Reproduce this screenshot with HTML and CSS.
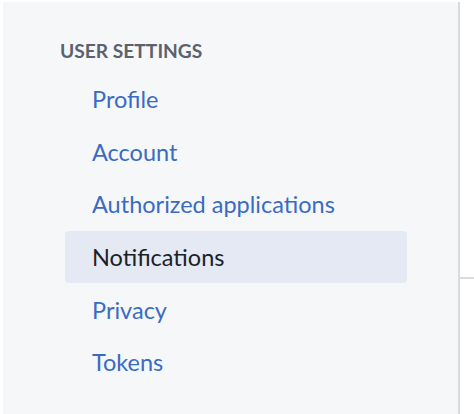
FILE: index.html
```html
<!DOCTYPE html>
<html>
<head>
<meta charset="utf-8">
<link rel="stylesheet" href="styles.css">
</head>
<body>
<div class="layout">
  <aside class="sidebar">
    <h2 class="heading">USER SETTINGS</h2>
    <ul class="nav">
      <li class="nav-item"><a class="nav-link" href="#">Profile</a></li>
      <li class="nav-item"><a class="nav-link" href="#">Account</a></li>
      <li class="nav-item"><a class="nav-link" href="#">Authorized applications</a></li>
      <li class="nav-item active"><a class="nav-link" href="#">Notifications</a></li>
      <li class="nav-item"><a class="nav-link" href="#">Privacy</a></li>
      <li class="nav-item"><a class="nav-link" href="#">Tokens</a></li>
    </ul>
  </aside>
  <main class="content">
    <div class="rule"></div>
  </main>
</div>
</body>
</html>
```
FILE: styles.css
```css
html, body {
  margin: 0;
  padding: 0;
  background: #ffffff;
  height: 100%;
}
.layout {
  display: flex;
  height: 100%;
  padding: 2px 0 0 3px;
  box-sizing: border-box;
  font-family: Lato, "Open Sans", sans-serif;
}
.sidebar {
  width: 455px;
  flex: none;
  background: #f6f7f9;
  border-right: 2px solid #d9dadd;
  box-sizing: content-box;
  padding: 0;
}
.heading {
  margin: 0;
  padding: 37px 0 0 57px;
  height: 34px;
  font-size: 19.2px;
  line-height: 24px;
  font-weight: 700;
  color: #5c626d;
}
.nav {
  list-style: none;
  margin: 0;
  padding: 0 0 0 62px;
}
.nav-item {
  width: 342px;
  height: 52.6px;
  display: flex;
  align-items: center;
  border-radius: 4px;
}
.nav-item.active {
  background: #e4e9f4;
}
.nav-link {
  padding-left: 27px;
  font-size: 23.5px;
  color: #3a6bc4;
  text-decoration: none;
}
.nav-item.active .nav-link {
  color: #1d2126;
}
.content {
  flex: 1;
  display: flex;
  flex-direction: column;
  padding-top: 275px;
}
.rule {
  height: 2px;
  background: #dcdcde;
}
```
